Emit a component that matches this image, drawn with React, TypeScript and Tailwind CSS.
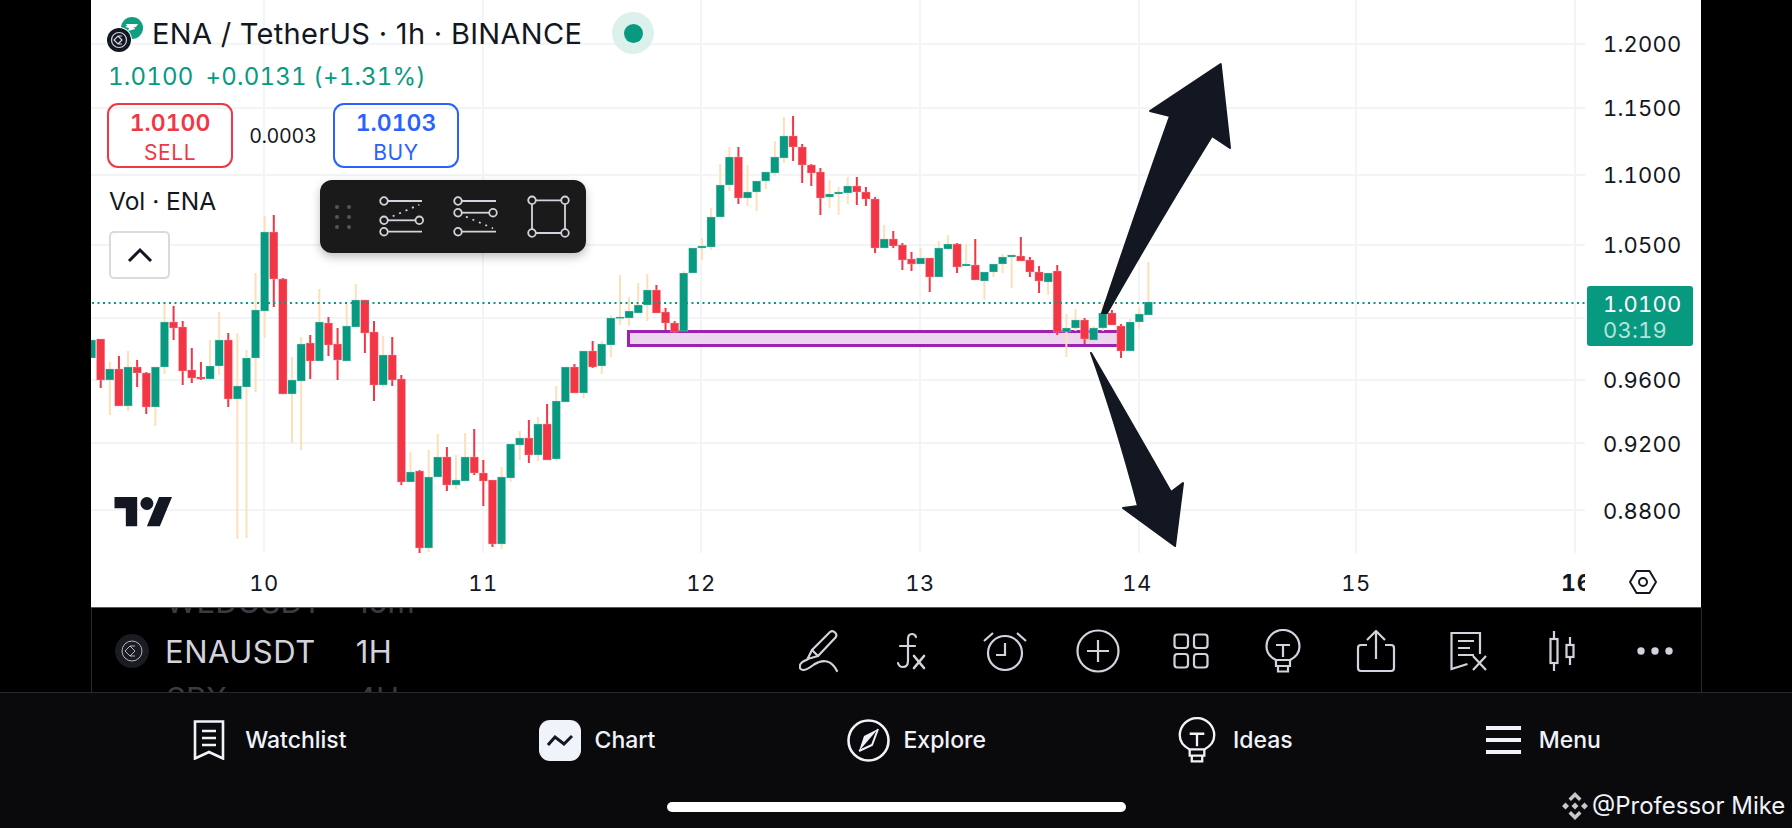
import React from "react";

type Candle = [string, number, number, number, number];

// index 0 sits at x = 91.6, every hour is one candle, values are body top/bottom and wick top/bottom in px
const candles: Candle[] = [
  ["g", 340, 358, 340, 358], ["r", 339, 380, 339, 388], ["g", 369, 380, 362, 415], ["r", 369, 406, 356, 406],
  ["g", 367, 406, 351, 411], ["r", 367, 373, 360, 387], ["r", 373, 407, 372, 414], ["g", 367, 407, 367, 426],
  ["g", 322, 367, 303, 374], ["r", 322, 328, 306, 340], ["r", 327, 371, 321, 385], ["r", 370, 378, 348, 383],
  ["r", 377, 379, 362, 380], ["g", 366, 379, 340, 379], ["g", 340, 366, 312, 375], ["r", 340, 399, 333, 407],
  ["g", 386, 399, 333, 539], ["g", 358, 387, 350, 538], ["g", 310, 358, 273, 392], ["g", 232, 311, 216, 338],
  ["r", 232, 279, 215, 307], ["r", 279, 394, 278, 394], ["g", 380, 394, 357, 443], ["g", 344, 381, 337, 450],
  ["r", 343, 361, 335, 379], ["g", 322, 361, 289, 361], ["r", 323, 345, 317, 356], ["r", 344, 360, 328, 380],
  ["g", 326, 361, 303, 361], ["g", 300, 327, 284, 327], ["r", 300, 333, 300, 353], ["r", 332, 385, 321, 401],
  ["g", 355, 385, 336, 387], ["r", 355, 380, 337, 386], ["r", 379, 482, 375, 485], ["g", 472, 482, 452, 482],
  ["r", 471, 548, 470, 553], ["g", 477, 548, 450, 552], ["g", 457, 477, 434, 477], ["r", 457, 485, 447, 491],
  ["g", 480, 485, 455, 489], ["g", 457, 481, 433, 481], ["r", 457, 473, 429, 475], ["r", 473, 481, 460, 506],
  ["r", 480, 544, 480, 547], ["g", 477, 544, 467, 549], ["g", 444, 478, 444, 482], ["g", 438, 445, 431, 460],
  ["r", 438, 455, 420, 463], ["g", 424, 455, 417, 461], ["r", 424, 460, 404, 460], ["g", 401, 459, 386, 461],
  ["g", 367, 402, 367, 402], ["r", 367, 393, 364, 393], ["g", 351, 393, 351, 398], ["r", 351, 367, 341, 368],
  ["g", 344, 366, 341, 374], ["g", 318, 345, 315, 357], ["g", 317, 318, 275, 325], ["g", 311, 318, 297, 326],
  ["g", 305, 313, 283, 313], ["g", 290, 305, 274, 321], ["r", 290, 313, 285, 313], ["r", 312, 323, 308, 330],
  ["r", 323, 332, 321, 333], ["g", 273, 331, 271, 331], ["g", 248, 273, 248, 273], ["g", 246, 248, 238, 260],
  ["g", 217, 247, 208, 250], ["g", 185, 217, 164, 217], ["g", 157, 185, 147, 191], ["r", 157, 198, 147, 204],
  ["g", 192, 198, 165, 206], ["g", 181, 192, 181, 211], ["g", 172, 181, 172, 189], ["g", 157, 173, 141, 176],
  ["g", 136, 158, 117, 163], ["r", 136, 147, 116, 161], ["r", 147, 165, 144, 183], ["r", 165, 173, 164, 186],
  ["r", 172, 198, 168, 215], ["g", 194, 197, 180, 208], ["g", 192, 194, 187, 215], ["g", 186, 193, 177, 204],
  ["r", 186, 192, 177, 205], ["r", 192, 199, 187, 206], ["r", 199, 248, 197, 253], ["g", 239, 248, 225, 248],
  ["r", 239, 246, 231, 248], ["r", 245, 260, 243, 270], ["r", 259, 264, 252, 271], ["g", 258, 264, 248, 264],
  ["r", 258, 277, 258, 292], ["g", 248, 277, 241, 277], ["g", 244, 249, 235, 250], ["r", 244, 267, 243, 273],
  ["g", 264, 266, 244, 266], ["r", 265, 280, 239, 280], ["g", 272, 281, 272, 300], ["g", 264, 272, 264, 277],
  ["g", 257, 264, 254, 273], ["g", 255, 257, 255, 288], ["r", 256, 261, 237, 261], ["r", 260, 272, 257, 277],
  ["r", 272, 281, 266, 293], ["g", 273, 282, 273, 295], ["r", 271, 332, 265, 335], ["g", 328, 332, 314, 357],
  ["g", 320, 328, 309, 331], ["r", 320, 339, 318, 344], ["g", 328, 340, 326, 340], ["g", 313, 328, 304, 331],
  ["r", 313, 325, 310, 325], ["r", 326, 351, 324, 358], ["g", 322, 351, 319, 351], ["g", 314, 322, 308, 329],
  ["g", 302, 315, 262, 315],
];

const hLines = [44, 108, 175, 245, 318, 380, 443, 510];
const vLines = [264, 483, 701, 920, 1139, 1356, 1575];

const prices = [
  { label: "1.2000", y: 43 },
  { label: "1.1500", y: 107 },
  { label: "1.1000", y: 174 },
  { label: "1.0500", y: 244 },
  { label: "0.9600", y: 379 },
  { label: "0.9200", y: 443 },
  { label: "0.8800", y: 510 },
];

const dates = [
  { label: "10", x: 264 },
  { label: "11", x: 483 },
  { label: "12", x: 701 },
  { label: "13", x: 920 },
  { label: "14", x: 1137 },
  { label: "15", x: 1356 },
];

function ChartDrawing() {
  return (
    <svg className="absolute inset-0" width={1610} height={607} viewBox="91 0 1610 607">
      {hLines.map((y) => (
        <line key={y} x1={91} x2={1585} y1={y} y2={y} stroke="#f3f4f6" strokeWidth={2} />
      ))}
      {vLines.map((x) => (
        <line key={x} x1={x} x2={x} y1={0} y2={553} stroke="#f3f4f6" strokeWidth={2} />
      ))}
      <rect x={628.5} y={331.5} width={490} height={14} fill="#edd5f0" stroke="#9c22b0" strokeWidth={3} />
      {candles.map(([c, top, bot, wt, wb], i) => {
        const x = 91.6 + i * 9.11;
        return (
          <g key={i}>
            <line x1={x} x2={x} y1={wt} y2={wb} stroke={c === "r" ? "#f23645" : "#fde0b8"} strokeWidth={2} />
            <rect
              x={x - 4.1}
              y={top}
              width={8.2}
              height={Math.max(bot - top, 1.5)}
              fill={c === "r" ? "#f23645" : "#089981"}
              stroke={c === "r" ? "#f9a3ab" : "#a8dcd2"}
              strokeWidth={0.4}
            />
          </g>
        );
      })}
      <line x1={92} x2={1587} y1={303} y2={303} stroke="#089981" strokeWidth={2} strokeDasharray="2 3.5" />
      <path
        d="M1102 313 Q1140 200 1170 116 L1150 111 L1220.7 64 L1230 148 L1212 136 Q1160 220 1107 313 Z"
        fill="#131722"
        stroke="#131722"
        strokeWidth={2}
        strokeLinejoin="round"
      />
      <path
        d="M1091 353 Q1130 420 1171 492 L1183 483 L1175 546 L1123 508 L1138 506 Q1115 420 1091 353 Z"
        fill="#131722"
        stroke="#131722"
        strokeWidth={2}
        strokeLinejoin="round"
      />
      <g transform="translate(114.5 490.5) scale(1.62)" fill="#131722">
        <path d="M14 22H7V11H0V4h14v18zM28 22h-8l7.5-18h8L28 22z" />
        <circle cx="20" cy="8" r="4" />
      </g>
    </svg>
  );
}

function PairLogo() {
  return (
    <svg width={48} height={44} viewBox="0 0 48 44" className="shrink-0">
      <circle cx={34} cy={16} r={11} fill="#0f9f80" />
      <path d="M28 12h12l-2 3h-3l2 1v1l-7 2 1-3-4-1 2-1z" fill="#fff" />
      <circle cx={21} cy={28} r={13} fill="#fff" />
      <circle cx={21} cy={28} r={12} fill="#131722" />
      <circle cx={21} cy={28} r={7.5} fill="none" stroke="#d1d4dc" strokeWidth={1.2} />
      <path d="M24 24h-4l-4 4 4 4h4M20 24l4 4-4 4" fill="none" stroke="#d1d4dc" strokeWidth={1.2} />
    </svg>
  );
}

function LayoutOne() {
  return (
    <svg width={46} height={41} viewBox="0 0 46 41" fill="none" stroke="#d1d4dc" strokeWidth={1.8}>
      <circle cx={5} cy={5} r={3.8} />
      <path d="M9 5h34" />
      <circle cx={5} cy={24.3} r={3.8} />
      <path d="M9 24.300h27.500" />
      <circle cx={40.3} cy={24.3} r={3.8} />
      <circle cx={5} cy={35.7} r={3.8} />
      <path d="M9 35.700h34" />
      <path d="M13.700 20.300L40.300 8.700" strokeDasharray="2 5" />
    </svg>
  );
}

function LayoutTwo() {
  return (
    <svg width={46} height={41} viewBox="0 0 46 41" fill="none" stroke="#d1d4dc" strokeWidth={1.8}>
      <circle cx={5} cy={5} r={3.8} />
      <path d="M9 5h34" />
      <circle cx={5} cy={16.7} r={3.8} />
      <path d="M9 16.700h27.500" />
      <circle cx={40} cy={16.7} r={3.8} />
      <circle cx={5} cy={35.7} r={3.8} />
      <path d="M9 35.700h34" />
      <path d="M13 20.700l27 11.600" strokeDasharray="2 5" />
    </svg>
  );
}

function RectTool() {
  return (
    <svg width={43} height={43} viewBox="0 0 43 43" fill="none" stroke="#d1d4dc" strokeWidth={1.8}>
      <path d="M9 5.300h25M5 9.300V34M38 9.300V34M9 38h25" />
      <circle cx={5} cy={5.3} r={3.8} />
      <circle cx={38} cy={5.3} r={3.8} />
      <circle cx={5} cy={38} r={3.8} />
      <circle cx={38} cy={38} r={3.8} />
    </svg>
  );
}

const toolStroke = "#d1d4dc";

function PenIcon() {
  return (
    <svg width={40} height={44} viewBox="0 0 40 44" fill="none" stroke={toolStroke} strokeWidth={2.2} strokeLinecap="round" strokeLinejoin="round">
      <path d="M8.500 30 13 21 31 3q2.500-2 5 .5t.5 5L19 27z" />
      <path d="M13 21l6 6" />
      <path d="M38 42q-4-8-10-9.500-6-1.500-13 3-7 5.500-11 5.500-4-.5-3-5 1-3 7.500-5.500" />
    </svg>
  );
}

function FxIcon() {
  return (
    <svg width={32} height={38} viewBox="0 0 32 38" fill="none" stroke={toolStroke} strokeWidth={2.2} strokeLinecap="round">
      <path d="M20 5q-1-3-4-3-4 0-4 5v22q0 6-5 6-4 0-5-4M4 14h15" />
      <path d="M18 24l10 12M28 24L18 36" strokeWidth={2.6} />
    </svg>
  );
}

function AlarmIcon() {
  return (
    <svg width={44} height={42} viewBox="0 0 44 42" fill="none" stroke={toolStroke} strokeWidth={2.2}>
      <circle cx={22} cy={23} r={17} />
      <path d="M22 13v12h-9M1 11l9-8M43 11l-9-8" />
    </svg>
  );
}

function PlusIcon() {
  return (
    <svg width={44} height={44} viewBox="0 0 44 44" fill="none" stroke={toolStroke} strokeWidth={2.2}>
      <circle cx={22} cy={22} r={20.5} />
      <path d="M22 11v22M11 22h22" />
    </svg>
  );
}

function GridIcon() {
  return (
    <svg width={36} height={36} viewBox="0 0 36 36" fill="none" stroke={toolStroke} strokeWidth={2.2}>
      <rect x={1.5} y={1.5} width={13.5} height={13.5} rx={3} />
      <rect x={21} y={1.5} width={13.5} height={13.5} rx={3} />
      <rect x={1.5} y={21} width={13.5} height={13.5} rx={3} />
      <rect x={21} y={21} width={13.5} height={13.5} rx={3} />
    </svg>
  );
}

function BulbIcon({ stroke = toolStroke, small }: { stroke?: string; small?: boolean }) {
  return (
    <svg width={small ? 38 : 36} height={small ? 46 : 44} viewBox="0 0 36 44" fill="none" stroke={stroke} strokeWidth={2.2}>
      <path d="M11 31C5 28 1.500 23 1.500 17.500a16.500 16.500 0 0 1 33 0C34.500 23 31 28 25 31z" />
      <path d="M11 16h14M18 16v12" />
      <path d="M11 31v6h14v-6M13 37v5.500h10V37" />
    </svg>
  );
}

function ShareIcon() {
  return (
    <svg width={40} height={44} viewBox="0 0 40 44" fill="none" stroke={toolStroke} strokeWidth={2.2} strokeLinejoin="round">
      <path d="M20 30V2M11 11l9-9 9 9" />
      <path d="M11 16H5q-3 0-3 3v20q0 3 3 3h30q3 0 3-3V19q0-3-3-3h-6" />
    </svg>
  );
}

function ReportIcon() {
  return (
    <svg width={38} height={40} viewBox="0 0 38 40" fill="none" stroke={toolStroke} strokeWidth={2.2}>
      <path d="M30 23V2H1.500v36l16-5" />
      <path d="M8 10h16M8 17h12M8 24h16" />
      <path d="M23 25l13 14M36 25L23 39" />
    </svg>
  );
}

function CandlesIcon() {
  return (
    <svg width={26} height={40} viewBox="0 0 26 40" fill="none" stroke={toolStroke} strokeWidth={2.2}>
      <path d="M5 0v8M5 32v8M21 6v8M21 26v8" />
      <rect x={1.5} y={8} width={7} height={24} />
      <rect x={17.5} y={14} width={7} height={12} />
    </svg>
  );
}

function DotsIcon() {
  return (
    <svg width={36} height={8} viewBox="0 0 36 8" fill={toolStroke}>
      <circle cx={4} cy={4} r={3.7} />
      <circle cx={18} cy={4} r={3.7} />
      <circle cx={32} cy={4} r={3.7} />
    </svg>
  );
}

const toolIcons = [
  <PenIcon key="pen" />,
  <FxIcon key="fx" />,
  <AlarmIcon key="alarm" />,
  <PlusIcon key="plus" />,
  <GridIcon key="grid" />,
  <BulbIcon key="bulb" />,
  <ShareIcon key="share" />,
  <ReportIcon key="report" />,
  <CandlesIcon key="candles" />,
  <DotsIcon key="dots" />,
];

function Legend() {
  return (
    <div className="absolute left-[16px] top-[14px] flex flex-col">
      <div className="flex h-[40px] items-center -ml-[9px]">
        <PairLogo />
        <span className="ml-[6px] pb-[2px] text-[29px] leading-none tracking-[0.3px] text-[#131722]">ENA / TetherUS · 1h · BINANCE</span>
        <div className="-mt-[2px] ml-[30px] flex h-[42px] w-[42px] items-center justify-center rounded-full bg-[#dcf0ec]">
          <div className="h-[19px] w-[19px] rounded-full bg-[#089981]" />
        </div>
      </div>
      <div className="ml-[1px] mt-[8px] flex h-[30px] items-center gap-[12px] text-[24px] tabular-nums leading-none tracking-[0.2px] text-[#089981]">
        <span>1.0100</span>
        <span>+0.0131 (+1.31%)</span>
      </div>
      <div className="mt-[11px] flex h-[65px] items-center">
        <div className="flex h-full w-[126px] flex-col items-center justify-center rounded-[11px] border-2 border-[#f23645] pt-[4px] text-[#f23645]">
          <span className="text-[23px] font-semibold tabular-nums leading-[29px]">1.0100</span>
          <span className="text-[21px] leading-[29px] tracking-[0.6px]">SELL</span>
        </div>
        <span className="w-[100px] pt-[2px] text-center text-[19.5px] tracking-[0.2px] text-[#131722]">0.0003</span>
        <div className="flex h-full w-[126px] flex-col items-center justify-center rounded-[11px] border-2 border-[#2962ff] pt-[4px] text-[#2962ff]">
          <span className="text-[23px] font-semibold tabular-nums leading-[29px]">1.0103</span>
          <span className="text-[21px] leading-[29px] tracking-[0.6px]">BUY</span>
        </div>
      </div>
      <div className="ml-[2px] mt-[18px] flex h-[30px] items-center text-[24.5px] leading-none text-[#131722]">Vol · ENA</div>
      <div className="ml-[2px] mt-[15px] flex h-[48px] w-[61px] items-center justify-center rounded-[5px] border-2 border-[#d8dade] bg-white">
        <svg width={26} height={16} viewBox="0 0 26 16" fill="none" stroke="#131722" strokeWidth={3}>
          <path d="M2 14L13 3l11 11" />
        </svg>
      </div>
    </div>
  );
}

function DrawingToolbar() {
  return (
    <div className="absolute left-[229px] top-[180px] flex h-[73px] w-[266px] items-center rounded-[12px] bg-[#1a1a1a] pl-[15px] shadow-[0_4px_10px_rgba(0,0,0,0.25)]">
      <div className="grid grid-cols-2 gap-x-[8px] gap-y-[6px]">
        {[0, 1, 2, 3, 4, 5].map((n) => (
          <div key={n} className="h-[4px] w-[4px] rounded-full bg-[#55565a]" />
        ))}
      </div>
      <div className="ml-[28px] flex items-center gap-[28px]">
        <LayoutOne />
        <LayoutTwo />
        <RectTool />
      </div>
    </div>
  );
}

function Axes() {
  return (
    <>
      {prices.map((p) => (
        <div
          key={p.label}
          className="absolute left-[1512px] text-[22px] tabular-nums leading-none tracking-[0.2px] text-[#131722]"
          style={{ top: p.y - 10 }}
        >
          {p.label}
        </div>
      ))}
      <div className="absolute left-[1496px] top-[286px] flex h-[60px] w-[106px] flex-col rounded-[3px] bg-[#089981] pl-[16px] pt-[5px] text-[22px] tabular-nums leading-[26px] tracking-[0.2px]">
        <span className="text-white">1.0100</span>
        <span className="text-[#b5e3da]">03:19</span>
      </div>
      {dates.map((d) => (
        <div
          key={d.label}
          className="absolute top-[572px] w-[60px] -translate-x-1/2 text-center text-[22px] tabular-nums leading-none tracking-[0.6px] text-[#131722]"
          style={{ left: d.x - 91 }}
        >
          {d.label}
        </div>
      ))}
      <div className="absolute left-[1470px] top-[572px] w-[24px] overflow-hidden whitespace-nowrap text-[23px] font-bold tabular-nums leading-none tracking-[1px] text-[#131722]">
        16
      </div>
      <svg className="absolute left-[1537px] top-[569px]" width={30} height={26} viewBox="0 0 30 26" fill="none" stroke="#131722" strokeWidth={2}>
        <path d="M8.500 2h13L28 13l-6.500 11h-13L2 13z" strokeLinejoin="round" />
        <circle cx={15} cy={13} r={4} />
      </svg>
    </>
  );
}

function NavItem({ icon, label }: { icon: React.ReactNode; label: string }) {
  return (
    <div className="flex h-[42px] items-center">
      {icon}
      <span className="text-[23px] font-medium leading-none text-[#f0f3fa]">{label}</span>
    </div>
  );
}

const navStroke = "#f0f3fa";

export default function App() {
  return (
    <div
      className="flex h-[828px] w-[1792px] flex-col overflow-hidden bg-black"
      style={{ fontFamily: "Inter, 'Liberation Sans', sans-serif" }}
    >
      <div className="ml-[91px] h-[608px] w-[1610px] shrink-0 border-b border-[#5a5a5e]">
        <div className="relative h-[607px] w-full overflow-hidden bg-white">
          <ChartDrawing />
          <Legend />
          <DrawingToolbar />
          <Axes />
        </div>
      </div>

      <div className="relative ml-[91px] flex h-[84px] w-[1611px] shrink-0 items-center justify-between overflow-hidden border-x border-[#2a2a2e] pt-[2px]">
        <span className="absolute left-[74px] top-[-23px] text-[31px] leading-[34px] text-[#3c3c40]">WEDUSDT</span>
        <span className="absolute left-[264px] top-[-23px] text-[31px] leading-[34px] text-[#3c3c40]">15m</span>
        <span className="absolute bottom-[-24px] left-[74px] text-[31px] leading-[34px] text-[#3c3c40]">SPX</span>
        <span className="absolute bottom-[-24px] left-[264px] text-[31px] leading-[34px] text-[#3c3c40]">4H</span>
        <div className="flex items-center">
          <div className="ml-[23px] flex h-[34px] w-[34px] items-center justify-center rounded-full bg-[#1a1c22]">
            <svg width={22} height={22} viewBox="0 0 22 22" fill="none" stroke="#b2b5be" strokeWidth={1}>
              <circle cx={11} cy={11} r={10} />
              <path d="M14 6H9l-5 5 5 5h5M9 6l5 5-5 5" />
            </svg>
          </div>
          <span className="ml-[16px] text-[31px] leading-none tracking-[0.5px] text-[#d1d4dc]">ENAUSDT</span>
          <span className="ml-[40px] text-[31px] leading-none tracking-[0.5px] text-[#d1d4dc]">1H</span>
        </div>
        <div className="flex items-center">
          {toolIcons.map((icon, i) => (
            <div key={i} className="flex h-[60px] w-[92.8px] items-center justify-center">
              {icon}
            </div>
          ))}
        </div>
      </div>

      <div className="relative flex flex-1 flex-col border-t border-[#2a2a2e] bg-[#0a0a0c] pt-[26px]">
        <div className="flex items-center justify-center gap-[192px] pl-[2px]">
          <NavItem
            label="Watchlist"
            icon={
              <svg className="mr-[20px]" width={32} height={40} viewBox="0 0 32 40" fill="none" stroke={navStroke} strokeWidth={2.6}>
                <path d="M2 1.500h28v37L16 32 2 38.500z" />
                <path d="M9 11h14M9 18h14M9 25h14" />
              </svg>
            }
          />
          <NavItem
            label="Chart"
            icon={
              <div className="mr-[14px] flex h-[41px] w-[42px] items-center justify-center rounded-[11px] bg-[#f0f3fa]">
                <svg width={26} height={14} viewBox="0 0 26 14" fill="none" stroke="#131722" strokeWidth={3}>
                  <path d="M1 12l7-8 9 7 8-8" />
                </svg>
              </div>
            }
          />
          <NavItem
            label="Explore"
            icon={
              <svg className="mr-[13px]" width={43} height={43} viewBox="0 0 43 43" fill="none" stroke={navStroke} strokeWidth={2.6}>
                <circle cx={21.5} cy={21.5} r={20} />
                <path d="M31 10L12 32l5-15z" fill={navStroke} stroke="none" />
                <path d="M31 10l-6 16-13 6" strokeWidth={2} />
              </svg>
            }
          />
          <NavItem
            label="Ideas"
            icon={
              <div className="mr-[17px]">
                <BulbIcon stroke={navStroke} small />
              </div>
            }
          />
          <NavItem
            label="Menu"
            icon={
              <svg className="ml-[1px] mr-[18px]" width={35} height={28} viewBox="0 0 35 28" fill={navStroke}>
                <rect width={35} height={4} y={0} />
                <rect width={35} height={4} y={12} />
                <rect width={35} height={4} y={24} />
              </svg>
            }
          />
        </div>
        <div className="mx-auto mb-[16px] mt-auto h-[10px] w-[459px] rounded-full bg-white" />
        <div className="absolute bottom-[8px] left-[1562px] flex items-center gap-[4px] text-[24px] leading-none text-[#f0f3fa]">
          <svg width={26} height={28} viewBox="0 0 26 28" fill="#c8c8cc">
            <path d="M13 0l6.500 6.500-2.500 2.500-4-4-4 4-2.500-2.500zM13 28l6.500-6.500-2.500-2.500-4 4-4-4-2.500 2.500zM3.500 10.500l3.500 3.500-3.500 3.500L0 14zM22.500 10.500L26 14l-3.500 3.500L19 14zM13 10.500l3.500 3.500-3.500 3.500L9.500 14z" />
          </svg>
          <span>@Professor Mike</span>
        </div>
      </div>
    </div>
  );
}
